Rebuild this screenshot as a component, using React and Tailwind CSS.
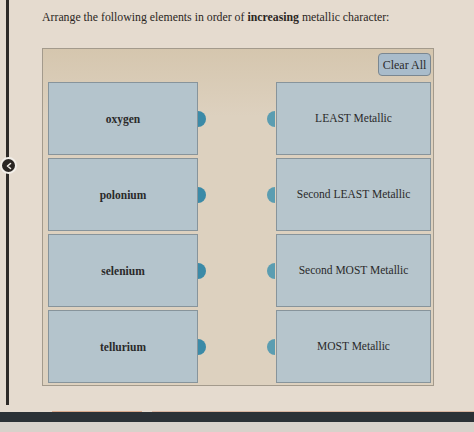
import React from "react";

const left = ["oxygen", "polonium", "selenium", "tellurium"];
const right = ["LEAST Metallic", "Second LEAST Metallic", "Second MOST Metallic", "MOST Metallic"];

function LeftBox({ label }) {
  return (
    <div className="relative h-[73px] w-[150px]">
      <div className="flex h-full w-full items-center justify-center border border-[#87949b] bg-[#b4c4cc] pt-[2px] text-[11.5px] font-bold text-[#2a2a2a]">
        {label}
      </div>
      <div className="absolute right-[-8px] top-1/2 h-[16px] w-[8px] -translate-y-1/2 rounded-r-full bg-[#3b8aa7]" />
    </div>
  );
}

function RightBox({ label }) {
  return (
    <div className="relative h-[73px] w-[155px]">
      <div className="absolute left-[-9px] top-1/2 h-[16px] w-[8px] -translate-y-1/2 rounded-l-full bg-[#5b9db1]" />
      <div className="flex h-full w-full items-center justify-center border border-[#87949b] bg-[#b6c5cc] text-[11.5px] text-[#2a2a2a]">
        {label}
      </div>
    </div>
  );
}

export default function App() {
  return (
    <div
      className="relative flex h-[432px] w-[474px] flex-col overflow-hidden bg-[#e5dbcf]"
      style={{ fontFamily: '"Liberation Serif", "Times New Roman", serif' }}
    >
      <div className="flex h-[411px] flex-row">
        <div className="w-[6px]" />
        <div className="h-[405px] w-[3px] bg-[#2e2a27]" />
        <div className="flex flex-1 flex-col pl-[33px] pt-[10px]">
          <div className="h-[14px] text-[11.8px] leading-[14px] text-[#2b2623]">
            Arrange the following elements in order of <span className="font-bold">increasing</span> metallic character:
          </div>
          <div className="mt-[24px] flex h-[338px] w-[392px] flex-col border border-[#a39a8c] bg-gradient-to-b from-[#d5c6ae] to-[#ddd1bf] to-[20%] pl-[5px] pr-[2px] pt-[4px]">
            <div className="flex justify-end">
              <div className="flex h-[23px] w-[53px] items-center justify-center rounded-[4px] border border-[#7a8791] bg-[#a9bccb] text-[12px] text-[#2b2b2b]">
                Clear All
              </div>
            </div>
            <div className="mt-[6px] flex flex-row">
              <div className="flex flex-col gap-[3px]">
                {left.map((l) => (
                  <LeftBox key={l} label={l} />
                ))}
              </div>
              <div className="w-[79px]" />
              <div className="flex flex-col gap-[3px]">
                {right.map((r) => (
                  <RightBox key={r} label={r} />
                ))}
              </div>
            </div>
          </div>
        </div>
      </div>
      <div className="flex h-[1px] flex-row">
        <div className="ml-[52px] h-[1px] w-[90px] bg-[#d9a98c]" />
        <div className="ml-[10px] h-[1px] flex-1 bg-[#d9b5a0]" />
      </div>
      <div className="h-[10px] bg-[#2b3136]" />
      <div className="flex-1 bg-[#d8d2cb]" />
      <div className="absolute left-[0px] top-[157px] flex h-[17px] w-[17px] items-center justify-center rounded-full border-2 border-[#f3efe9] bg-[#2a2623]">
        <svg width="8" height="8" viewBox="0 0 8 8">
          <path d="M5.5 1.5 L2.5 4 L5.5 6.5" stroke="#f3efe9" strokeWidth="1.6" fill="none" strokeLinecap="round" strokeLinejoin="round" />
        </svg>
      </div>
    </div>
  );
}
